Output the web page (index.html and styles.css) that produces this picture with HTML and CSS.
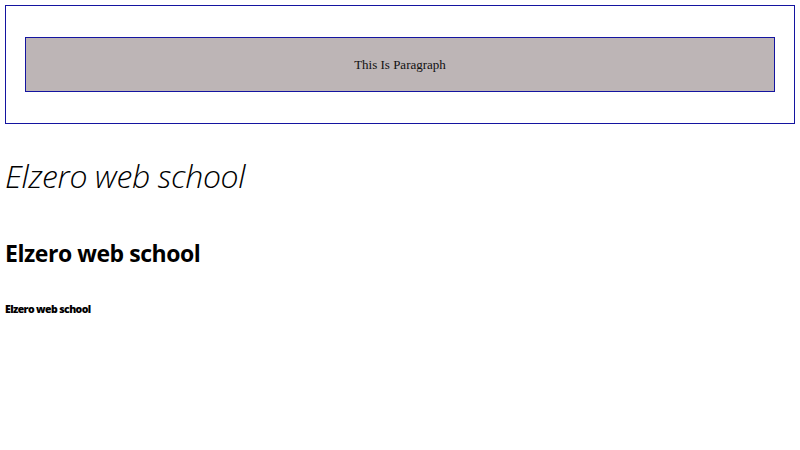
FILE: index.html
```html
<!DOCTYPE html>
<html lang="en">
<head>
  <meta charset="UTF-8">
  <meta name="viewport" content="width=device-width, initial-scale=1.0">
  <title>Elzero</title>
  <link rel="stylesheet" href="styles.css">
</head>
<body>
  <div class="parent">
    <p class="child">This Is Paragraph</p>
  </div>
  <h1 class="light">Elzero web school</h1>
  <h2 class="bold">Elzero web school</h2>
  <h6 class="small">Elzero web school</h6>
</body>
</html>
```

FILE: styles.css
```css
body {
  margin: 0;
  font-family: "Liberation Serif", serif;
}
.parent {
  margin: 5px;
  padding: 31px 19px;
  border: 1px solid #1414a0;
}
.child {
  margin: 0;
  padding: 19px 0;
  background: #bdb5b6;
  border: 1px solid #1414a0;
  text-align: center;
  font-size: 13px;
  line-height: 15px;
  color: #111;
}
.light {
  font-family: "Open Sans", sans-serif;
  font-weight: 300;
  font-style: italic;
  font-size: 32px;
  line-height: 44px;
  letter-spacing: -0.35px;
  margin: 30px 5px 0 5px;
}
.bold {
  font-family: "Open Sans", sans-serif;
  font-weight: 700;
  font-size: 23px;
  line-height: 32px;
  letter-spacing: -0.45px;
  margin: 39px 5px 0 5px;
}
.small {
  font-family: "Open Sans", sans-serif;
  font-weight: 800;
  font-size: 10.5px;
  line-height: 15px;
  letter-spacing: -0.6px;
  margin: 33px 5px 0 5px;
}
```
